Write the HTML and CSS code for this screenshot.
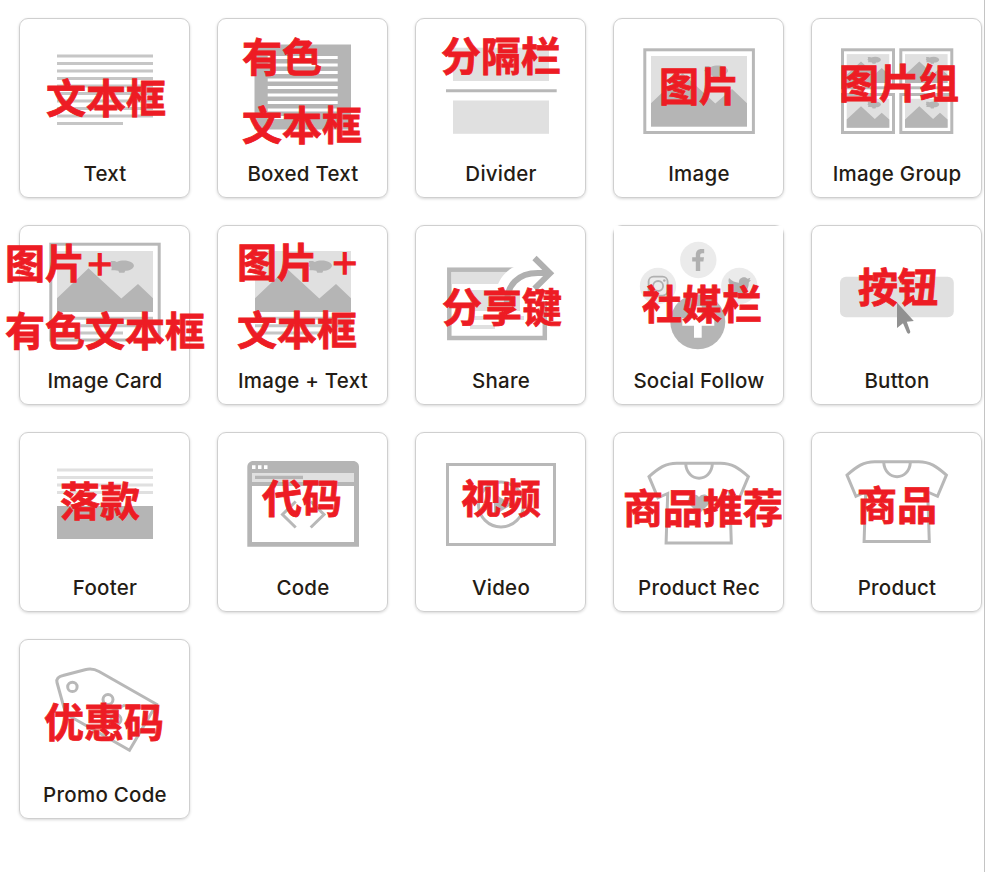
FILE: index.html
```
<!DOCTYPE html>
<html lang="en">
<head>
    <meta charset="UTF-8">
    <meta name="viewport" content="width=device-width, initial-scale=1.0">
    <title>Content Blocks</title>
    <link rel="stylesheet" href="styles.css">
</head>
<body>
    <!-- Shared shapes -->
    <svg class="defs" width="0" height="0">
        <defs>
            <g id="blimp">
                <path d="M-11.5 -4.8 H-7.5 L-5.5 -3.8 C-1 -5.6 5 -5.6 9 -3.5 C12.5 -1.5 12.5 1.5 9 3.5 C7 4.6 5 5 3 5 L2 7 L-3 7 L-4 5 L-7.5 4.5 L-11 4.5 L-10.5 1.5 L-12 0 L-11 -1.5 Z"/>
            </g>
            <g id="photo">
                <rect class="light" x="0" y="0" width="96" height="61"/>
                <path class="dark" d="M0 47.3 L31.5 17.3 L64.3 47.5 L81 33 L96 47.3 V61 H0 Z"/>
                <use class="dark" href="#blimp" x="65.3" y="14.7"/>
            </g>
            <g id="thumb">
                <rect class="line" x="1.5" y="1.5" width="51" height="38"/>
                <rect class="light" x="5.7" y="5.8" width="42.6" height="29"/>
                <path class="dark" d="M5.7 26.5 L20 13.3 L33.8 26 L40.7 19.7 L48.3 26.5 V34.8 H5.7 Z"/>
                <use class="dark" href="#blimp" transform="translate(33.3 11.4) scale(.57)"/>
            </g>
            <g id="shirt" class="line">
                <path d="M36.3 44.7 C46 36 53 31.2 64 31.2 H108 C119 31.2 126 36 135.7 44.7 L126.8 65.8 L117 61.5 L118.6 111 H53.4 L55 61.5 L45.2 65.8 Z"/>
                <path d="M73 31.5 C74 51 98.7 51 99.7 31.5"/>
            </g>
        </defs>
    </svg>

    <div class="panel">
        <div class="card">
            <svg class="icon" viewBox="1 1 169 139">
                <path class="text-line" d="M38 38H134M38 45.5H134M38 53H134M38 60.5H134M38 68H134M38 75.5H134M38 83H134M38 90.5H134M38 98H134M38 105.4H104"/>
            </svg>
            <div class="label">Text</div>
            <div class="note note-text">文本框</div>
        </div>

        <div class="card">
            <svg class="icon" viewBox="1 1 169 139">
                <rect class="dark" x="37.5" y="26.5" width="96.5" height="85"/>
                <path class="white-line" d="M50.7 39.5H120.7M50.7 47H120.7M50.7 54.5H120.7M50.7 62H120.7M50.7 69.5H120.7M50.7 77H120.7M50.7 84.5H120.7M50.7 92H120.7M50.7 99.5H98"/>
            </svg>
            <div class="label">Boxed Text</div>
            <div class="note note-boxed">有色<br>文本框</div>
        </div>

        <div class="card">
            <svg class="icon" viewBox="1 1 169 139">
                <rect class="light" x="38" y="29.7" width="96" height="33.3"/>
                <path class="line" d="M31 72.8H141.7"/>
                <rect class="light" x="38" y="82.5" width="96" height="33.3"/>
            </svg>
            <div class="label">Divider</div>
            <div class="note note-divider">分隔栏</div>
        </div>

        <div class="card">
            <svg class="icon" viewBox="1 1 169 139">
                <rect class="line" x="31.8" y="31.8" width="108.6" height="82.7"/>
                <use href="#photo" x="38" y="38"/>
                <rect class="dark" x="38" y="98" width="96" height="10.7"/>
            </svg>
            <div class="label">Image</div>
            <div class="note note-image">图片</div>
        </div>

        <div class="card">
            <svg class="icon" viewBox="1 1 169 139">
                <use href="#thumb" x="30" y="30.3"/>
                <use href="#thumb" x="88.3" y="30.3"/>
                <use href="#thumb" x="30" y="75"/>
                <use href="#thumb" x="88.3" y="75"/>
            </svg>
            <div class="label">Image Group</div>
            <div class="note note-group">图片组</div>
        </div>

        <div class="card">
            <svg class="icon" viewBox="1 1 169 139">
                <rect class="line" x="31.8" y="19.2" width="108.4" height="95.8"/>
                <use href="#photo" x="38" y="26"/>
                <path class="text-line" d="M38 93.3H134M38 100.7H134M38 108H104"/>
            </svg>
            <div class="label">Image Card</div>
            <div class="note note-card">图片<span class="plus">+</span><br>有色文本框</div>
        </div>

        <div class="card">
            <svg class="icon" viewBox="1 1 169 139">
                <use href="#photo" x="38" y="26"/>
                <path class="text-line" d="M38 93.3H134M38 100.7H134M38 108H104"/>
            </svg>
            <div class="label">Image + Text</div>
            <div class="note note-image-text">图片 <span class="plus">+</span><br>文本框</div>
        </div>

        <div class="card">
            <svg class="icon" viewBox="1 1 169 139">
                <rect class="line frame" x="34.3" y="44.7" width="95.5" height="68.3"/>
                <rect class="light" x="36.5" y="47" width="60" height="12"/>
                <path class="white" d="M82 64C83 55 91 45 101 41H136V76H104V64Z"/>
                <path class="light" d="M55 65H105V86H55ZM55 91H109V95H55ZM55 100H80V104H55Z"/>
                <path class="arrow" d="M91.7 79C91.7 60 103 48 123 48H135M119.5 33L135 48.3L119.5 63.6"/>
            </svg>
            <div class="label">Share</div>
            <div class="note note-share">分享键</div>
        </div>

        <div class="card card-social">
            <svg class="icon" viewBox="1 1 169 139">
                <circle class="bubble" cx="85.3" cy="35" r="18.2"/>
                <circle class="bubble" cx="45" cy="61" r="18.2"/>
                <circle class="bubble" cx="126.3" cy="61" r="18.2"/>
                <circle class="dark" cx="84.8" cy="96.8" r="27.5"/>
                <path class="white" d="M81 81.3H88.7V93.2H101.3V100.7H88.7V112.7H81V100.7H69.3V93.2H81Z"/>
                <path class="glyph" d="M82.8 46V36.5H79.2V32.3H82.8V30C82.8 26 85 24 88.5 24H91.2V28.2H89.2C88 28.2 87.2 29 87.2 30.2V32.3H91L90.4 36.5H87.2V46Z"/>
                <rect class="glyph-line" x="35.6" y="51.6" width="19" height="19" rx="5"/>
                <circle class="glyph-line" cx="45.1" cy="61" r="5"/>
                <circle class="glyph" cx="51.3" cy="55.5" r="1.3"/>
                <path class="glyph" d="M116 53C119 56 122 57.5 126 57.7C125.5 54.5 128 52.2 131 52.2C132.5 52.2 133.7 52.8 134.6 53.7L137.5 52.7L136.3 55.2L138 55L135.8 57.5C136 66 129.5 71.5 122 71.5C119.5 71.5 117 70.8 115 69.5C117.5 69.7 119.5 69 121 67.7C119 67.4 117.5 66 117 64.3H119C117 63.5 115.6 61.8 115.6 59.6L117.5 60C115.5 58.5 115 55.5 116 53Z"/>
            </svg>
            <div class="label">Social Follow</div>
            <div class="note note-social">社媒栏</div>
        </div>

        <div class="card">
            <svg class="icon" viewBox="1 1 169 139">
                <rect class="light" x="29" y="51.8" width="113.8" height="40.4" rx="6"/>
                <path class="cursor" d="M86 77.5L102.8 96L95.8 96.7L99.2 106.2C99.8 108.6 96.9 109.6 96 107.6L92 98.3L86 103Z"/>
            </svg>
            <div class="label">Button</div>
            <div class="note note-button">按钮</div>
        </div>

        <div class="card">
            <svg class="icon" viewBox="1 1 169 139">
                <path class="light-line" d="M38 38H134M38 45.5H134M38 53H134M38 60.5H134"/>
                <rect class="dark" x="38" y="74" width="96" height="33"/>
            </svg>
            <div class="label">Footer</div>
            <div class="note note-footer">落款</div>
        </div>

        <div class="card">
            <svg class="icon" viewBox="1 1 169 139">
                <path class="dark" d="M30.3 35C30.3 31.5 32.8 29 36.3 29H136C139.5 29 142 31.5 142 35V114.8H30.3Z"/>
                <rect class="light" x="35" y="41" width="102" height="9"/>
                <rect class="white" x="35" y="54" width="102" height="56"/>
                <path class="white" d="M35 33.2H38.5V37H35ZM41 33.2H44.5V37H41ZM47 33.2H50.5V37H47Z"/>
                <path class="dark" d="M38 43.8H86V47H38Z"/>
                <path class="line" d="M78.7 69.5L65.5 82.5L78.7 95.5M93.7 69.5L107 82.5L93.7 95.5"/>
            </svg>
            <div class="label">Code</div>
            <div class="note note-code">代码</div>
        </div>

        <div class="card">
            <svg class="icon" viewBox="1 1 169 139">
                <rect class="line" x="32.5" y="32.5" width="107" height="80"/>
                <circle class="line" cx="86" cy="72.5" r="22.5"/>
                <path class="dark" d="M79 61.5L97 72.5L79 83.5Z"/>
            </svg>
            <div class="label">Video</div>
            <div class="note note-video">视频</div>
        </div>

        <div class="card">
            <svg class="icon" viewBox="1 1 169 139">
                <use href="#shirt" x="-.3"/>
                <path class="dark" d="M86 82L77 73C71.5 66 80 58.5 86 65C92 58.5 100.5 66 95 73Z"/>
            </svg>
            <div class="label">Product Rec</div>
            <div class="note note-rec">商品推荐</div>
        </div>

        <div class="card">
            <svg class="icon" viewBox="1 1 169 139">
                <use href="#shirt" x="-.3" y="-1.5"/>
            </svg>
            <div class="label">Product</div>
            <div class="note note-product">商品</div>
        </div>

        <div class="card">
            <svg class="icon" viewBox="1 1 169 139">
                <path class="line" d="M44 36.5L66 30.8C71.5 29.3 76 30.3 80 32.5L137.5 65.3L110.5 111.3L53 78.5C48.5 76 46 72.5 44.8 68L38 43.5C37 40 39.5 37.5 44 36.5Z"/>
                <circle class="line" cx="53.4" cy="47.9" r="4.7"/>
                <circle class="line" cx="89" cy="60.5" r="5"/>
                <circle class="line" cx="97" cy="80.5" r="5"/>
                <path class="line" d="M106 66L82 77"/>
            </svg>
            <div class="label">Promo Code</div>
            <div class="note note-promo">优惠码</div>
        </div>
    </div>
</body>
</html>
```
FILE: styles.css
```
* {
    box-sizing: border-box;
}

body {
    margin: 0;
    background-color: #fff;
    font-family: Inter, "Noto Sans CJK SC", sans-serif;
}

.defs {
    display: block;
}

.panel {
    display: grid;
    grid-template-columns: repeat(5, 171px);
    grid-auto-rows: 180px;
    gap: 27px;
    width: 985px;
    height: 872px;
    padding: 18px 0 0 19px;
    border-right: 1px solid #c4c4c4;
    overflow: hidden;
}

.card {
    position: relative;
    display: flex;
    flex-direction: column;
    border: 1px solid #cfcfcf;
    border-radius: 9px;
    box-shadow: 0 1px 3px rgba(0, 0, 0, 0.16);
}

.icon {
    display: block;
    width: 169px;
    height: 139px;
}

/* square corners of the artwork cover the rounded border */
.card-social .icon {
    background-color: #fff;
}

.label {
    line-height: 32px;
    padding-left: 1px;
    font-size: 20.5px;
    font-weight: 500;
    letter-spacing: 0.25px;
    text-align: center;
    white-space: nowrap;
    color: #241c15;
}

/* Icon parts */
.dark {
    fill: #b5b5b5;
}

.light {
    fill: #e0e0e0;
}

.white {
    fill: #fff;
}

.line {
    fill: none;
    stroke: #b8b8b8;
    stroke-width: 3;
}

.frame {
    stroke-width: 4.5;
}

.text-line {
    stroke: #c6c6c6;
    stroke-width: 3;
}

.light-line {
    stroke: #e0e0e0;
    stroke-width: 3;
}

.white-line {
    stroke: #fff;
    stroke-width: 3.2;
}

.arrow {
    fill: none;
    stroke: #b0b0b0;
    stroke-width: 6;
}

.bubble {
    fill: #ebebeb;
}

.glyph {
    fill: #b0b0b0;
}

.glyph-line {
    fill: none;
    stroke: #b0b0b0;
    stroke-width: 1.8;
}

.cursor {
    fill: #919191;
}

/* Red translations written over the cards */
.note {
    position: absolute;
    z-index: 1;
    font-family: "Noto Sans CJK SC", sans-serif;
    font-size: 40px;
    font-weight: 700;
    line-height: 68px;
    white-space: nowrap;
    color: #ed1c24;
    -webkit-text-stroke: 0.8px #ed1c24;
}

.plus {
    margin-left: 1px;
    font-family: "DejaVu Sans", sans-serif;
    font-size: 33px;
    font-weight: 400;
    line-height: 0;
    vertical-align: 3px;
    -webkit-text-stroke: 1.4px #ed1c24;
}

.note-image-text .plus {
    margin-left: 5px;
}

.note-text { left: 26px; top: 43px; }
.note-boxed { left: 24px; top: 2px; }
.note-divider { left: 25px; top: 1px; }
.note-image { left: 45px; top: 31px; }
.note-group { left: 27px; top: 28px; }
.note-card { left: -15px; top: 1px; }
.note-image-text { left: 19px; top: 0; }
.note-share { left: 26px; top: 45px; }
.note-social { left: 28px; top: 42px; }
.note-button { left: 46px; top: 25px; }
.note-footer { left: 40px; top: 32px; }
.note-code { left: 44px; top: 29px; }
.note-video { left: 45px; top: 29px; }
.note-rec { left: 9px; top: 39px; }
.note-product { left: 45px; top: 36px; }
.note-promo { left: 24px; top: 46px; }
```
